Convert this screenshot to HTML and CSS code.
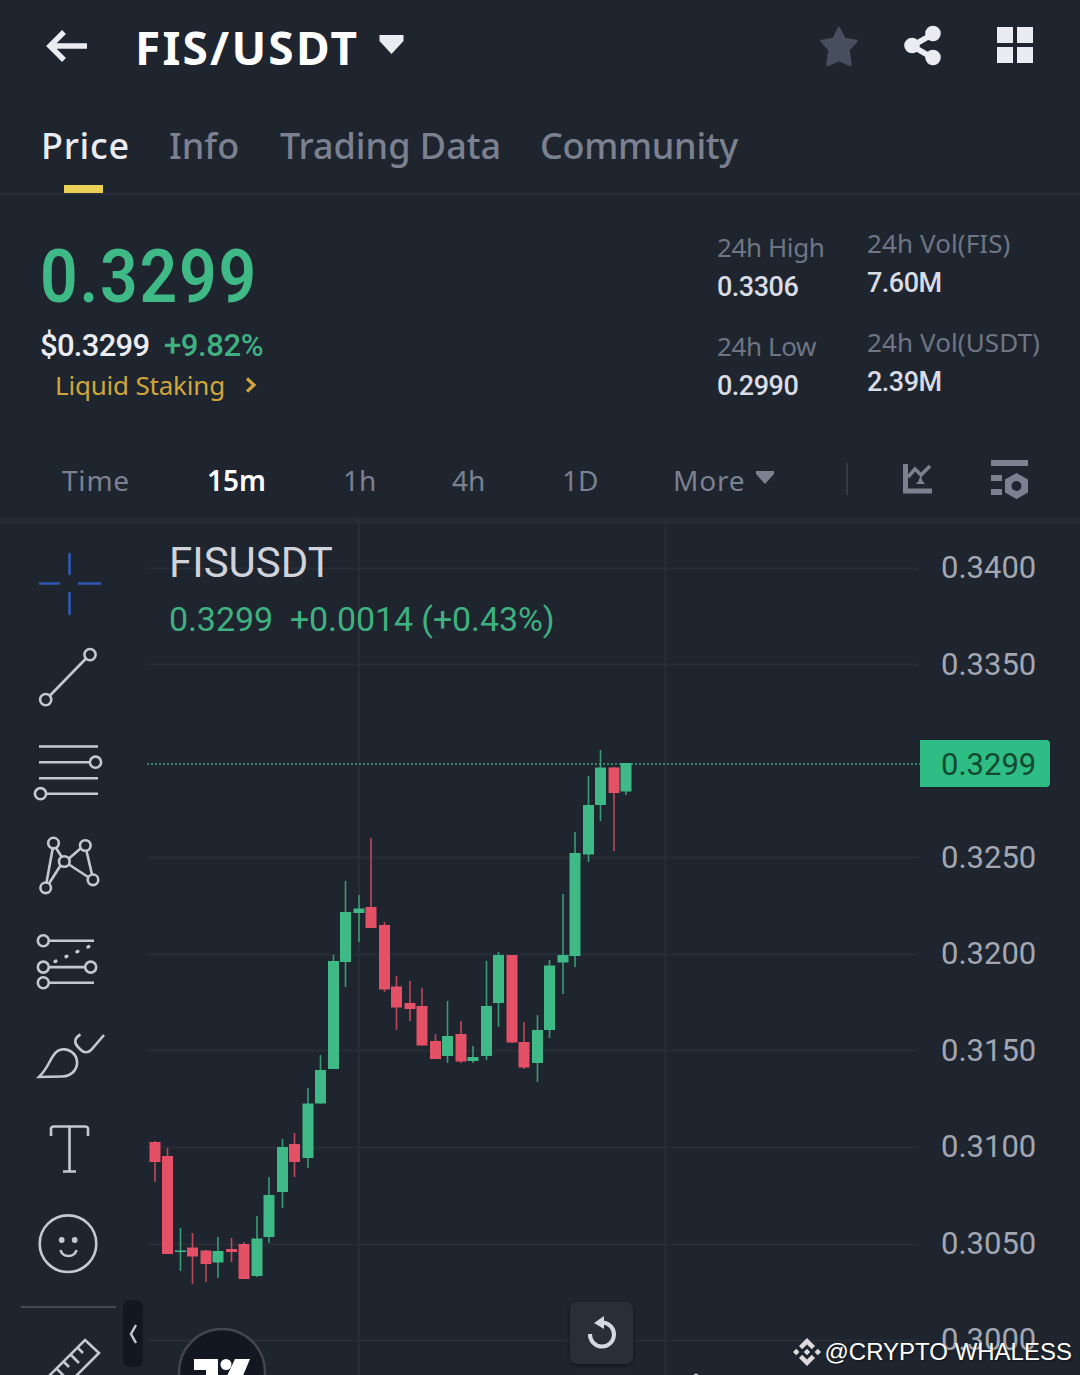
FILE: index.html
```html
<!DOCTYPE html>
<html lang="en">
<head>
    <meta charset="UTF-8">
    <meta name="viewport" content="width=device-width, initial-scale=1.0">
    <title>FIS/USDT</title>
    <link rel="stylesheet" href="styles.css">
</head>
<body>
    <div class="app">
        <header class="header">
            <svg class="back" width="42" height="34" viewBox="0 0 42 34">
                <path d="M18 3 L4 17 L18 31 M4 17 H41" fill="none" stroke="#eaecf2" stroke-width="5.500"/>
            </svg>
            <h1>FIS/USDT</h1>
            <svg class="caret" width="26" height="21" viewBox="0 0 26 21">
                <path d="M1.500 0 H25.500 V6 L13.500 19 L1.500 6 Z" fill="#eaecf2"/>
            </svg>
            <div class="actions">
                <svg width="40" height="42" viewBox="0 0 40 42">
                    <path d="M20 3 L25.500 14 L37.500 16 L29.500 25 L31.500 40 L20 35 L8.500 40 L10.500 25 L2.500 16 L14.500 14 Z" fill="#474f5e" stroke="#474f5e" stroke-width="2.500" stroke-linejoin="round"/>
                </svg>
                <svg width="40" height="42" viewBox="0 0 40 42">
                    <path d="M31 9 L10 21 L31 33" fill="none" stroke="#eaecf2" stroke-width="5.500"/>
                    <circle cx="31" cy="8.500" r="7.800" fill="#eaecf2"/>
                    <circle cx="10" cy="20.500" r="7.800" fill="#eaecf2"/>
                    <circle cx="31" cy="32.500" r="7.800" fill="#eaecf2"/>
                </svg>
                <svg width="36" height="37" viewBox="0 0 36 37">
                    <path d="M0 0 H16 V16 H0 Z M20 0 H36 V16 H20 Z M0 20 H16 V36 H0 Z M20 20 H36 V36 H20 Z" fill="#eaecf2"/>
                </svg>
            </div>
        </header>

        <nav class="tabs">
            <a class="tab active">Price</a>
            <a class="tab">Info</a>
            <a class="tab">Trading Data</a>
            <a class="tab">Community</a>
        </nav>

        <section class="summary">
            <div class="price">
                <div class="last">0.3299</div>
                <div class="fiat"><span class="usd">$0.3299</span><span class="change">+9.82%</span></div>
                <div class="tag">
                    <span>Liquid Staking</span>
                    <svg width="12" height="16" viewBox="0 0 12 16"><path d="M2 1.500 L9 8 L2 14.500" fill="none" stroke="#d0a63c" stroke-width="3.200"/></svg>
                </div>
            </div>
            <div class="stats">
                <div class="stat"><span class="name">24h High</span><span class="value">0.3306</span></div>
                <div class="stat"><span class="name">24h Low</span><span class="value">0.2990</span></div>
            </div>
            <div class="stats volume">
                <div class="stat"><span class="name">24h Vol(FIS)</span><span class="value">7.60M</span></div>
                <div class="stat"><span class="name">24h Vol(USDT)</span><span class="value">2.39M</span></div>
            </div>
        </section>

        <nav class="intervals">
            <span class="time">Time</span>
            <span class="active">15m</span>
            <span>1h</span>
            <span>4h</span>
            <span>1D</span>
            <span class="more">More <svg width="18" height="14" viewBox="0 0 18 14"><path d="M0 0 H18 V3 L9 13 L0 3 Z" fill="#7b8190"/></svg></span>
            <i class="separator"></i>
            <svg width="30" height="32" viewBox="0 0 30 32" fill="none" stroke="#7b8190">
                <path d="M2.500 1 V28 H29" stroke-width="5"/>
                <path d="M5 14 L12 6 L18 12 L27 3" stroke-width="3.500"/>
                <path d="M17.500 12 L19.500 18 L22 21 H13 L15.500 18 Z" fill="#7b8190" stroke="none"/>
            </svg>
            <svg class="settings" width="38" height="40" viewBox="0 0 38 40">
                <path d="M1 1 H38 V7 H1 Z M1 16 H12 V22 H1 Z M1 30 H12 V36 H1 Z" fill="#7b8190"/>
                <path fill-rule="evenodd" d="M26.500 14 L38 20.500 V33.500 L26.500 40 L15 33.500 V20.500 Z M26.500 22 A5 5 0 1 0 26.500 32 A5 5 0 1 0 26.500 22 Z" fill="#7b8190"/>
            </svg>
        </nav>

        <main class="chart">
            <aside class="tools">
                <svg viewBox="0 0 80 80" class="selected"><path d="M41.500 10 V32 M41.500 49 V72 M11 40.500 H32 M50 40.500 H73"/></svg>
                <svg viewBox="0 0 80 80"><path d="M22 57.500 L58 20.500"/><circle cx="62" cy="16.600" r="5.600"/><circle cx="17.700" cy="61.600" r="5.600"/></svg>
                <svg viewBox="0 0 80 80"><path d="M11 14.500 H70 M11 30.200 H62 M11 46.200 H70 M18 61.700 H70"/><circle cx="67.500" cy="30.200" r="5.600"/><circle cx="12.500" cy="61.700" r="5.600"/></svg>
                <svg viewBox="0 0 80 80">
                    <path d="M24.700 22.500 L18.500 56.500 M28 22 L33.500 30.500 M32.500 39.500 L21 57.500 M41 32.500 L52.500 22.500 M58.500 25 L64 48.500 M41 38.500 L60 51"/>
                    <circle cx="25.500" cy="17.100" r="5.300"/><circle cx="57.300" cy="19.500" r="5.300"/><circle cx="36.300" cy="35.500" r="5.300"/><circle cx="65" cy="53.800" r="5.300"/><circle cx="17.700" cy="61.800" r="5.300"/>
                </svg>
                <svg viewBox="0 0 80 80">
                    <path d="M21 19.700 H66 M21 46.100 H57 M21 61.700 H66"/>
                    <circle cx="15.300" cy="19.700" r="5.500"/><circle cx="15.300" cy="46.100" r="5.500"/><circle cx="62.700" cy="46.100" r="5.500"/><circle cx="15.300" cy="61.700" r="5.500"/>
                    <path class="dots" d="M27 40.500 L61 25.500"/>
                </svg>
                <svg viewBox="0 0 80 80"><path d="M11 62 C19 54 21 47 25 41 C31 31 43 33 48 42 C52 53 44 61.500 34 61.500 Z M52.500 19.500 C46 23 46 28 50 32 L53 35 C56 38 60 38 63 35 L76 20"/></svg>
                <svg viewBox="0 0 80 80"><path d="M23 27 V20 Q23 17.500 26 17.500 H57 Q60 17.500 60 20 V27 M41.500 17.500 V62.500 M35 62.500 H48"/></svg>
                <svg viewBox="0 0 80 80"><circle cx="40" cy="39.700" r="28.300"/><path d="M32.500 46 Q34 52 40.500 52 Q47 52 48.500 46"/><circle class="dot" cx="33.700" cy="36" r="2.900"/><circle class="dot" cx="46.700" cy="36" r="2.900"/></svg>
                <hr>
                <svg viewBox="0 0 80 80" class="ruler"><path d="M57 24 L71 37 L27 81 L13 68 Z M49 31 L55 37 M42 38 L51 47 M35 45 L41 51 M28 52 L37 61"/></svg>
            </aside>

            <div class="plot">
                <svg id="candles" viewBox="147 518 773 857" width="773" height="857">
                    <g class="grid">
                        <path d="M147 568.500 H918 M147 664.500 H918 M147 857.500 H918 M147 954.500 H918 M147 1050.500 H918 M147 1147.500 H918 M147 1244.500 H918 M147 1340.500 H918 M359 518 V1375 M665.500 518 V1375"/>
                    </g>
                    <path class="last-line" d="M147 764 H920"/>
                    <circle cx="696" cy="1376" r="2.500" fill="#c3c8d3"/>
                </svg>
                <div class="legend">
                    <div class="symbol">FISUSDT</div>
                    <div class="quote"><span>0.3299</span><span>+0.0014 (+0.43%)</span></div>
                </div>
                <svg class="tv" width="90" height="47" viewBox="0 0 90 47">
                    <circle cx="45" cy="44" r="43" fill="#131722" stroke="#434651" stroke-width="2.500"/>
                    <path d="M17 31 H41 V50 H29 V42 H17 Z M58 31 H73 L65 50 H49 Z" fill="#fff"/>
                    <circle cx="49" cy="36.500" r="5.500" fill="#fff"/>
                </svg>
                <button class="reset">
                    <svg width="32" height="36" viewBox="0 0 32 36">
                        <path d="M4 19 A12 12 0 1 0 17 7.500" fill="none" stroke="#d5d8e0" stroke-width="4"/>
                        <path d="M8 8 L18 1 V14 Z" fill="#d5d8e0"/>
                    </svg>
                </button>
            </div>

            <div class="axis">
                <span>0.3400</span>
                <span>0.3350</span>
                <span class="current"><b>0.3299</b></span>
                <span>0.3250</span>
                <span>0.3200</span>
                <span>0.3150</span>
                <span>0.3100</span>
                <span>0.3050</span>
                <span>0.3000</span>
            </div>

            <div class="collapse">
                <svg width="10" height="22" viewBox="0 0 10 22"><path d="M8 2 L3 11 L8 20" fill="none" stroke="#c3c6cf" stroke-width="2.500"/></svg>
            </div>
        </main>

        <div class="watermark">
            <svg width="28" height="28" viewBox="0 0 28 28" fill="#dcdcdc">
                <path d="M14 0 L22 8 L18.800 11.200 L14 6.400 L9.200 11.200 L6 8 Z M14 28 L6 20 L9.200 16.800 L14 21.600 L18.800 16.800 L22 20 Z M3.200 10.800 L6.400 14 L3.200 17.200 L0 14 Z M24.800 10.800 L28 14 L24.800 17.200 L21.600 14 Z M14 10.800 L17.200 14 L14 17.200 L10.800 14 Z"/>
            </svg>
            <span>@CRYPTO WHALESS</span>
        </div>
    </div>

    <script src="chart.js"></script>
</body>
</html>
```
FILE: styles.css
```css
body {
    margin: 0;
    background: #1f252f;
    color: #eaecf2;
    font-family: "Noto Sans", sans-serif;
}
.app {
    position: relative;
    width: 1080px;
    height: 1375px;
    overflow: hidden;
    white-space: nowrap;
}
.header {
    display: flex;
    align-items: center;
    height: 92px;
    padding: 0 47px 0 46px;
}
.header svg {
    margin-bottom: 1px;
}
.header .back {
    margin-right: 47px;
}
h1 {
    width: 223px;
    margin: 2px 20px 0 0;
    color: #fff;
    font-size: 46px;
    font-weight: 700;
    line-height: 60px;
    letter-spacing: 2.2px;
}
.actions {
    display: flex;
    align-items: center;
    margin-left: auto;
}
.actions svg:nth-child(2) {
    margin: 0 55px 1px 43px;
}
.tabs {
    display: grid;
    grid-template-columns: 128px 111px 260px 1fr;
    height: 101px;
    padding-left: 41px;
    border-bottom: 2px solid #292f39;
}
.tab {
    position: relative;
    height: 101px;
    color: #7b8190;
    font-size: 36px;
    font-weight: 500;
    line-height: 107px;
}
.tab.active {
    color: #eaecf2;
    letter-spacing: 0.7px;
}
.tab.active::after {
    content: "";
    position: absolute;
    left: 23px;
    bottom: 0;
    width: 39px;
    height: 8px;
    background: #eccf55;
}
.tab:last-child {
    letter-spacing: -0.3px;
}
.summary {
    display: flex;
    height: 245px;
    padding-left: 40px;
}
.price {
    width: 677px;
}
.last {
    width: 240px;
    height: 90px;
    margin-top: 35px;
    color: #3fb986;
    font-family: Roboto, sans-serif;
    font-size: 75px;
    font-weight: 600;
    line-height: 92px;
    letter-spacing: 2px;
    transform: scaleX(0.88);
    transform-origin: left;
}
.fiat {
    display: flex;
    gap: 14px;
    font-family: Roboto, sans-serif;
    font-size: 31px;
    font-weight: 500;
    line-height: 52px;
}
.usd {
    width: 110px;
    letter-spacing: -0.7px;
}
.change {
    color: #3fb07f;
    font-weight: 500;
    letter-spacing: -0.4px;
}
.tag {
    display: flex;
    align-items: center;
    padding-left: 15px;
    color: #d0a63c;
    font-size: 26px;
    line-height: 26px;
    letter-spacing: -0.2px;
}
.tag span {
    width: 190px;
}
.stats {
    width: 150px;
    padding-top: 33px;
}
.stats.volume {
    padding-top: 29px;
}
.stat {
    display: flex;
    flex-direction: column;
    height: 99px;
    line-height: 39px;
}
.name {
    color: #6f7584;
    font-size: 26px;
    letter-spacing: -0.4px;
}
.volume .name {
    letter-spacing: 0.1px;
}
.value {
    color: #d9dce4;
    font-family: Roboto, sans-serif;
    font-size: 27px;
    font-weight: 500;
    line-height: 41px;
    letter-spacing: -0.5px;
}
.intervals {
    display: grid;
    grid-template-columns: 145px 136px 109px 110px 111px 173px 57px 87px 1fr;
    align-items: center;
    height: 78px;
    padding: 0 0 0 62px;
    border-bottom: 6px solid #252b35;
    color: #7b8190;
    font-size: 28px;
}
.intervals span {
    padding-top: 2px;
}
.intervals .time,
.intervals .more {
    letter-spacing: 0.8px;
}
.intervals .active {
    color: #fff;
    font-weight: 600;
}
.more svg {
    margin: 0 0 6px 3px;
}
.separator {
    width: 2px;
    height: 32px;
    background: #343b47;
}
.chart {
    position: relative;
    display: grid;
    grid-template-columns: 147px 773px 160px;
    grid-template-rows: 851px;
    height: 851px;
}
.tools {
    display: flex;
    flex-direction: column;
    padding: 12px 0 0 28px;
}
.tools svg {
    flex: none;
    width: 80px;
    height: 80px;
    margin: 7.2px 0;
    fill: none;
    stroke: #c3c8d3;
    stroke-width: 2.6;
}
.tools .selected {
    stroke: #3158b5;
}
.tools .dot {
    fill: #c3c8d3;
    stroke: none;
}
.tools .dots {
    stroke-width: 3.4;
    stroke-linecap: round;
    stroke-dasharray: 1 11;
}
.tools hr {
    flex: none;
    width: 95px;
    height: 2px;
    margin: 15px 0 0 -7px;
    border: 0;
    background: #434a57;
}
.tools .ruler {
    margin-top: 8px;
}
.plot {
    position: relative;
    font-family: Roboto, sans-serif;
}
#candles {
    display: block;
    margin-top: -6px;
}
.grid {
    stroke: #282e38;
    stroke-width: 2;
}
.last-line {
    stroke: #35826a;
    stroke-width: 2;
    stroke-dasharray: 2 2;
}
.up {
    fill: #3fb986;
}
.down {
    fill: #e45066;
}
.wick {
    opacity: 0.8;
}
.legend {
    position: absolute;
    top: 14px;
    left: 22px;
}
.symbol {
    color: #d0d3da;
    font-size: 42px;
    line-height: 50px;
}
.quote {
    display: flex;
    gap: 17px;
    color: #3fb07f;
    font-size: 34px;
    line-height: 62px;
    letter-spacing: -0.1px;
}
.tv {
    position: absolute;
    bottom: 0;
    left: 30px;
}
.reset {
    position: absolute;
    top: 778px;
    left: 423px;
    display: flex;
    align-items: center;
    justify-content: center;
    width: 63px;
    height: 62px;
    padding: 0;
    border: 0;
    border-radius: 7px;
    background: #2a2e39;
    box-shadow: 0 2px 4px rgba(0, 0, 0, 0.4);
}
.axis {
    padding-left: 21px;
    color: #a3a7b1;
    font-family: Roboto, sans-serif;
    font-size: 31px;
}
.axis span {
    display: block;
    height: 96.55px;
    line-height: 88px;
}
.axis .current {
    padding-top: 23px;
    height: 73.55px;
}
.axis b {
    display: block;
    width: 109px;
    height: 47px;
    margin-left: -21px;
    padding-left: 21px;
    border-radius: 0 4px 4px 0;
    background: #2ebd85;
    color: #13492f;
    font-weight: 400;
    line-height: 49px;
}
.collapse {
    position: absolute;
    top: 776px;
    left: 123px;
    display: flex;
    align-items: center;
    justify-content: center;
    width: 20px;
    height: 67px;
    border-radius: 7px;
    background: #131722;
}
.watermark {
    position: absolute;
    right: 8px;
    bottom: 9px;
    display: flex;
    align-items: center;
    gap: 3px;
    color: #fff;
    font-family: "Liberation Sans", Arial, sans-serif;
    font-size: 24px;
    line-height: 28px;
    text-shadow: 1px 1px 2px rgba(0, 0, 0, 0.5);
}
```
FILE: chart.js
```js
// x, high, body top, body bottom, low, up
const candles = [
    [155, 1141, 1142, 1162, 1182, 0],
    [167.5, 1148, 1156, 1254, 1254, 0],
    [180.5, 1228, 1250.5, 1252, 1271, 1],
    [192.5, 1233, 1247.5, 1256.5, 1284, 0],
    [206, 1250, 1250.5, 1264, 1282, 0],
    [218, 1237, 1251, 1262.5, 1278, 1],
    [231.5, 1238, 1249, 1252, 1262, 0],
    [244, 1242, 1244, 1279, 1279, 0],
    [257, 1216, 1238.5, 1276, 1277, 1],
    [269, 1177, 1195, 1237, 1243, 1],
    [282.5, 1139, 1147, 1192, 1208, 1],
    [294.5, 1133, 1144, 1162, 1177, 0],
    [308, 1088, 1103.5, 1158, 1168, 1],
    [320.5, 1055, 1070, 1103.5, 1103.5, 1],
    [333.5, 955, 961, 1069, 1069, 1],
    [345.5, 881, 912, 962, 987, 1],
    [359, 895, 908.5, 913, 942, 1],
    [371, 838, 907, 928, 928, 0],
    [384.5, 922, 925, 989.5, 992, 0],
    [396.5, 976, 986.5, 1007.5, 1030, 0],
    [410, 981, 1003, 1009, 1021, 0],
    [422, 988, 1006, 1045.5, 1045.5, 0],
    [435.5, 1034, 1041, 1059, 1059, 0],
    [447.5, 1001, 1036, 1056, 1063, 1],
    [461, 1021, 1034, 1061.5, 1063, 0],
    [473, 1046, 1057, 1061, 1063, 1],
    [486.5, 961, 1006, 1056, 1060, 1],
    [498.5, 952, 955, 1003, 1027, 1],
    [512, 955, 955, 1042.5, 1043, 0],
    [524, 1022, 1042, 1067.5, 1069, 0],
    [537.5, 1015, 1030, 1063, 1082, 1],
    [549.5, 960, 965.5, 1030, 1038, 1],
    [563, 894, 955, 962.5, 994, 1],
    [575, 832, 853, 956, 967, 1],
    [588.5, 776, 805, 854.5, 862, 1],
    [600.5, 750, 767.5, 805, 821, 1],
    [614, 767, 767.5, 793, 851, 0],
    [626, 763, 763, 791.5, 795, 1]
];

const svg = document.getElementById('candles');

function addRect(x, y, width, height, name) {
    const rect = document.createElementNS('http://www.w3.org/2000/svg', 'rect');
    rect.setAttribute('x', x);
    rect.setAttribute('y', y);
    rect.setAttribute('width', width);
    rect.setAttribute('height', height);
    rect.setAttribute('class', name);
    svg.appendChild(rect);
}

candles.forEach(([x, high, top, bottom, low, up]) => {
    const name = up ? 'up' : 'down';
    addRect(x - 0.8, high, 1.6, low - high, name + ' wick');
    addRect(x - 5.5, top, 11, bottom - top, name);
});
```
